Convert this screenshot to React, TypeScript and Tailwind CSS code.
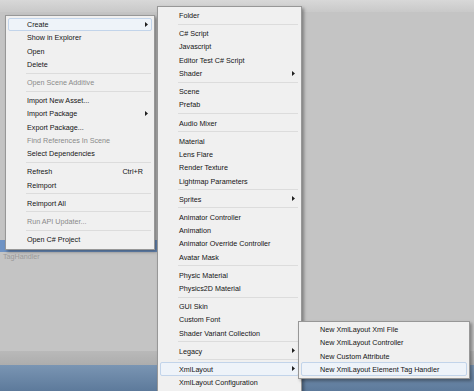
import React from "react";

type Row =
  | "sep"
  | { label: string; disabled?: boolean; sub?: boolean; hot?: boolean; keys?: string };

const mainMenu: Row[] = [
  { label: "Create", sub: true, hot: true },
  { label: "Show in Explorer" },
  { label: "Open" },
  { label: "Delete" },
  "sep",
  { label: "Open Scene Additive", disabled: true },
  "sep",
  { label: "Import New Asset..." },
  { label: "Import Package", sub: true },
  { label: "Export Package..." },
  { label: "Find References In Scene", disabled: true },
  { label: "Select Dependencies" },
  "sep",
  { label: "Refresh", keys: "Ctrl+R" },
  { label: "Reimport" },
  "sep",
  { label: "Reimport All" },
  "sep",
  { label: "Run API Updater...", disabled: true },
  "sep",
  { label: "Open C# Project" },
];

const createMenu: Row[] = [
  { label: "Folder" },
  "sep",
  { label: "C# Script" },
  { label: "Javascript" },
  { label: "Editor Test C# Script" },
  { label: "Shader", sub: true },
  "sep",
  { label: "Scene" },
  { label: "Prefab" },
  "sep",
  { label: "Audio Mixer" },
  "sep",
  { label: "Material" },
  { label: "Lens Flare" },
  { label: "Render Texture" },
  { label: "Lightmap Parameters" },
  "sep",
  { label: "Sprites", sub: true },
  "sep",
  { label: "Animator Controller" },
  { label: "Animation" },
  { label: "Animator Override Controller" },
  { label: "Avatar Mask" },
  "sep",
  { label: "Physic Material" },
  { label: "Physics2D Material" },
  "sep",
  { label: "GUI Skin" },
  { label: "Custom Font" },
  { label: "Shader Variant Collection" },
  "sep",
  { label: "Legacy", sub: true },
  "sep",
  { label: "XmlLayout", sub: true, hot: true },
  { label: "XmlLayout Configuration" },
];

const xmlMenu: Row[] = [
  { label: "New XmlLayout Xml File" },
  { label: "New XmlLayout Controller" },
  { label: "New Custom Attribute" },
  { label: "New XmlLayout Element Tag Handler", hot: true },
];

function Arrow() {
  return (
    <svg width="3" height="5" viewBox="0 0 3 5" className="shrink-0">
      <path d="M0 0 L3 2.5 L0 5 Z" fill="#1f1f1f" />
    </svg>
  );
}

function MenuRows({ rows }: { rows: Row[] }) {
  return (
    <>
      {rows.map((r, i) =>
        r === "sep" ? (
          <div key={i} className="flex h-[4.8px] items-center pl-[20px] pr-[3px]">
            <div className="h-px w-full bg-[#dcdcdc]" />
          </div>
        ) : (
          <div
            key={i}
            className={
              "mx-[2px] flex h-[13.3px] items-center rounded-[2px] border pl-[18px] pr-[3px] " +
              (r.hot ? "border-[#c2d4ea] bg-[#eef3f9]" : "border-transparent")
            }
          >
            <span
              className={
                "flex-1 whitespace-nowrap pt-[1px] leading-none " +
                (r.disabled ? "text-[#8a8a8a]" : "text-[#141414]")
              }
            >
              {r.label}
            </span>
            {r.keys && <span className="mr-[5px] pt-[1px] leading-none text-[#141414]">{r.keys}</span>}
            {r.sub && <Arrow />}
          </div>
        )
      )}
    </>
  );
}

export default function App() {
  return (
    <div
      className="relative h-[391px] w-[474px] overflow-hidden bg-[#c4c4c4] text-[7.2px]"
      style={{ fontFamily: '"Liberation Sans", Arial, sans-serif' }}
    >
      {/* window behind the menus */}
      <div className="flex h-full flex-col">
        <div className="h-[12px] bg-gradient-to-b from-[#d8d8d8] to-[#c9c9c9]" />
        <div className="flex-1 pt-[228px]">
          <div className="h-[12px] w-[158px] bg-[#6f93c4]" />
          <div className="pl-[3px] pt-[1px] leading-none text-[#9a9a9a]">TagHandler</div>
        </div>
        <div className="h-[14px] bg-gradient-to-b from-[#b9b9b9] to-[#adadad]" />
        <div className="h-[26px] bg-gradient-to-b from-[#7a95b3] to-[#5d7a9b]" />
      </div>

      {/* context menu */}
      <div className="absolute left-[5px] top-[15px] w-[150px] border border-[#979797] bg-[#f0f0f0] pb-[3px] pt-[1.5px] shadow-[2px_2px_3px_rgba(0,0,0,0.35)]">
        <MenuRows rows={mainMenu} />
      </div>

      {/* Create submenu */}
      <div className="absolute left-[157px] top-[6px] w-[145px] border border-[#979797] bg-[#f0f0f0] pb-[3px] pt-[1.5px] shadow-[2px_2px_3px_rgba(0,0,0,0.35)]">
        <MenuRows rows={createMenu} />
      </div>

      {/* XmlLayout submenu */}
      <div className="absolute left-[298px] top-[321px] w-[172px] border border-[#979797] bg-[#f0f0f0] pb-[2px] pt-[0.5px] shadow-[2px_2px_3px_rgba(0,0,0,0.35)]">
        <MenuRows rows={xmlMenu} />
      </div>
    </div>
  );
}
